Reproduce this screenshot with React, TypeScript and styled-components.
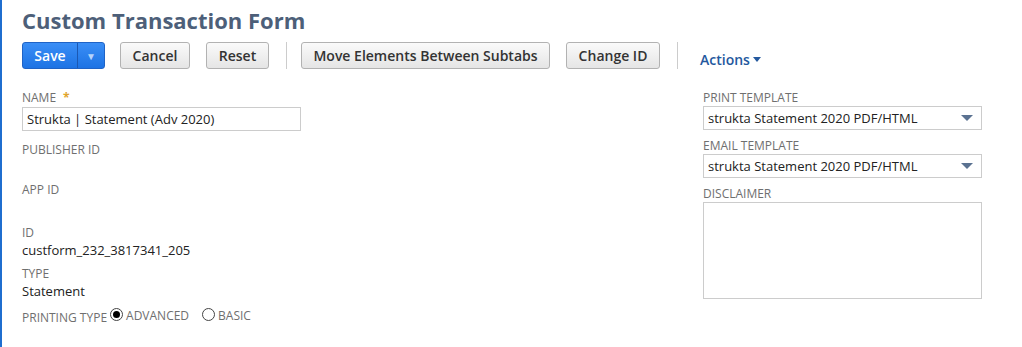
import React from "react";
import styled, { createGlobalStyle } from "styled-components";

const GlobalStyle = createGlobalStyle`
  html, body {
    margin: 0;
    padding: 0;
    background: #ffffff;
    font-family: "Open Sans", "Liberation Sans", sans-serif;
  }
`;

const Page = styled.main`
  width: 1022px;
  height: 347px;
  box-sizing: border-box;
  border-left: 2px solid #1f6ecf;
  padding: 6px 0 0 20px;
  overflow: hidden;
`;

const Title = styled.h1`
  margin: 0;
  font-size: 22px;
  font-weight: 700;
  color: #4d5f79;
  line-height: 28px;
`;

const Toolbar = styled.div`
  display: flex;
  align-items: center;
  margin-top: 8px;
  height: 27px;
`;

const SplitButton = styled.div`
  display: flex;
  height: 27px;
  border-radius: 3px;
  border: 1px solid #1f63c6;
  background: linear-gradient(#3a8ef6, #1d73e4);
  box-sizing: border-box;
  margin-right: 15px;
`;

const SaveLabel = styled.span`
  width: 54px;
  display: flex;
  align-items: center;
  justify-content: center;
  color: #fff;
  font-size: 14px;
  font-weight: 600;
  border-right: 1px solid #1b58b3;
`;

const SaveArrow = styled.span`
  width: 26px;
  display: flex;
  align-items: center;
  justify-content: center;
  color: #b6d3fb;
  font-size: 10px;
`;

const Button = styled.button<{ $w: number }>`
  width: ${(p) => p.$w}px;
  height: 27px;
  margin-right: 16px;
  padding: 0;
  border: 1px solid #b2b2b2;
  border-radius: 3px;
  background: linear-gradient(#fafafa, #e5e5e5);
  font-family: inherit;
  font-size: 14px;
  font-weight: 600;
  color: #333;
`;

const Divider = styled.span`
  width: 1px;
  height: 27px;
  background: #cccccc;
  margin: 0 14px 0 1px;
`;

const Actions = styled.span`
  margin: 7px 0 0 8px;
  font-size: 14px;
  font-weight: 600;
  color: #24589e;
  display: flex;
  align-items: center;
  gap: 3px;
`;

const Body = styled.div`
  display: flex;
  margin-top: 21px;
`;

const LeftCol = styled.div`
  width: 681px;
  display: flex;
  flex-direction: column;
`;

const RightCol = styled.div`
  width: 279px;
  display: flex;
  flex-direction: column;
`;

const Label = styled.div<{ $mt?: number }>`
  font-size: 12px;
  color: #6f6f6f;
  line-height: 16px;
  margin-top: ${(p) => p.$mt ?? 0}px;
`;

const Star = styled.span`
  color: #e0a42c;
  margin-left: 7px;
  font-weight: 700;
`;

const Value = styled.div`
  font-size: 13px;
  color: #222;
  line-height: 18px;
`;

const TextInput = styled.div`
  width: 279px;
  height: 24px;
  box-sizing: border-box;
  border: 1px solid #cccccc;
  padding: 0 4px;
  font-size: 13px;
  line-height: 22px;
  color: #222;
  margin-top: 1px;
`;

const Select = styled.div`
  width: 279px;
  height: 24px;
  box-sizing: border-box;
  border: 1px solid #cccccc;
  padding: 0 4px;
  display: flex;
  align-items: center;
  justify-content: space-between;
  font-size: 13px;
  color: #222;
`;

const Caret = styled.span`
  width: 0;
  height: 0;
  border-left: 6px solid transparent;
  border-right: 6px solid transparent;
  border-top: 6px solid #5b7291;
  margin-right: 4px;
`;

const TextArea = styled.div`
  width: 279px;
  height: 97px;
  box-sizing: border-box;
  border: 1px solid #cccccc;
`;

const RadioRow = styled.div`
  display: flex;
  align-items: center;
  margin-top: 9px;
  font-size: 12px;
  color: #6f6f6f;
`;

const Radio = styled.span<{ $on?: boolean }>`
  width: 13px;
  height: 13px;
  box-sizing: border-box;
  border-radius: 50%;
  border: 1px solid #444;
  display: inline-flex;
  align-items: center;
  justify-content: center;
  margin: 0 3px 0 ${(p) => (p.$on ? 3 : 13)}px;
  position: relative;
  top: -3px;
  &::after {
    content: "";
    width: 7px;
    height: 7px;
    border-radius: 50%;
    background: ${(p) => (p.$on ? "#000" : "transparent")};
  }
`;

const RadioText = styled.span`
  position: relative;
  top: -2px;
`;

export default function App() {
  return (
    <Page>
      <GlobalStyle />
      <Title>Custom Transaction Form</Title>
      <Toolbar>
        <SplitButton>
          <SaveLabel>Save</SaveLabel>
          <SaveArrow>▼</SaveArrow>
        </SplitButton>
        <Button $w={70}>Cancel</Button>
        <Button $w={63}>Reset</Button>
        <Divider />
        <Button $w={249}>Move Elements Between Subtabs</Button>
        <Button $w={94}>Change ID</Button>
        <Divider />
        <Actions>
          Actions
          <svg width="8" height="5" viewBox="0 0 8 5">
            <path d="M0 0 L8 0 L4 5 Z" fill="#24589e" />
          </svg>
        </Actions>
      </Toolbar>
      <Body>
        <LeftCol>
          <Label>
            NAME<Star>*</Star>
          </Label>
          <TextInput>Strukta | Statement (Adv 2020)</TextInput>
          <Label $mt={11}>PUBLISHER ID</Label>
          <Label $mt={24}>APP ID</Label>
          <Label $mt={27}>ID</Label>
          <Value>custform_232_3817341_205</Value>
          <Label $mt={7}>TYPE</Label>
          <Value>Statement</Value>
          <RadioRow>
            PRINTING TYPE
            <Radio $on />
            <RadioText>ADVANCED</RadioText>
            <Radio />
            <RadioText>BASIC</RadioText>
          </RadioRow>
        </LeftCol>
        <RightCol>
          <Label>PRINT TEMPLATE</Label>
          <Select>
            strukta Statement 2020 PDF/HTML
            <Caret />
          </Select>
          <Label $mt={8}>EMAIL TEMPLATE</Label>
          <Select>
            strukta Statement 2020 PDF/HTML
            <Caret />
          </Select>
          <Label $mt={8}>DISCLAIMER</Label>
          <TextArea />
        </RightCol>
      </Body>
    </Page>
  );
}
